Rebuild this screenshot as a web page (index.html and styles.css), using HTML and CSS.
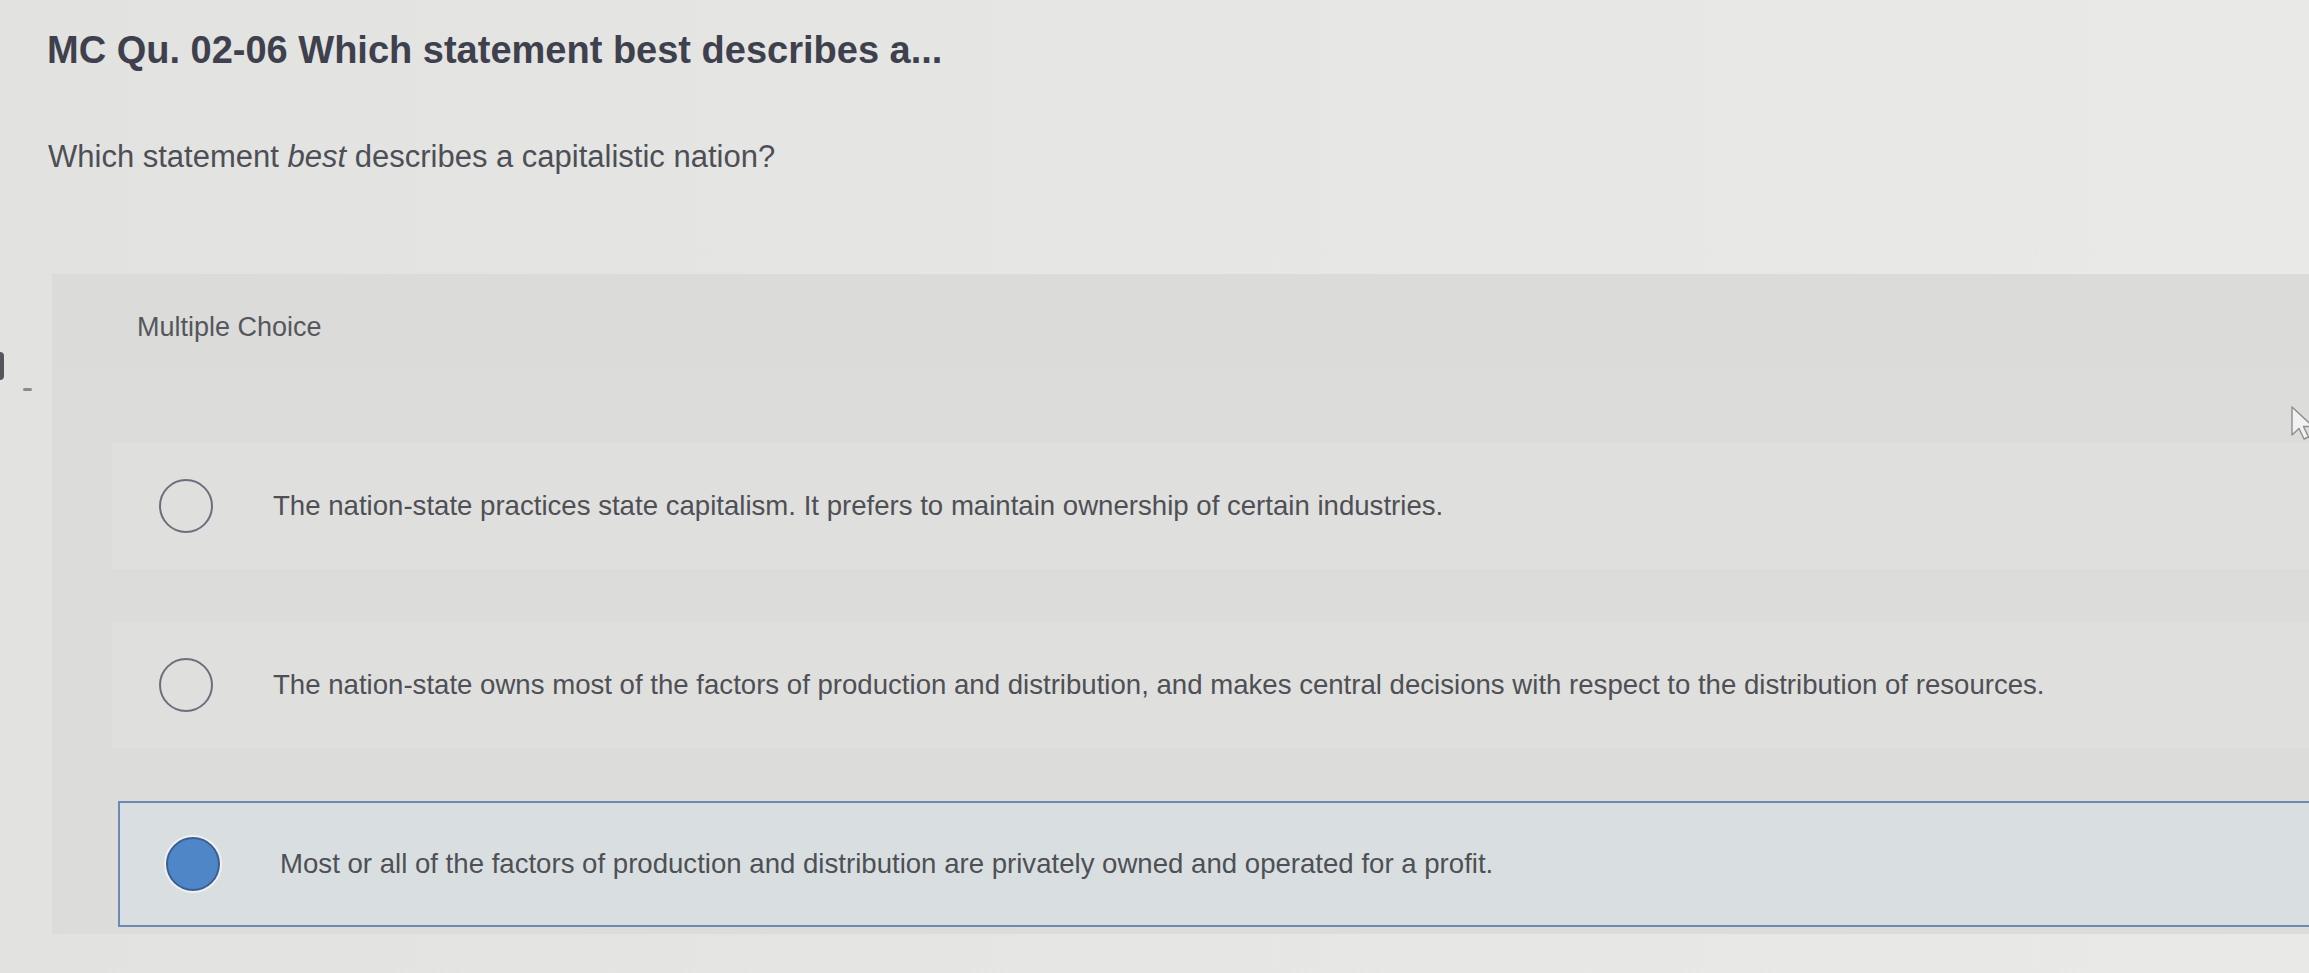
FILE: index.html
```html
<!DOCTYPE html>
<html lang="en">
<head>
<meta charset="utf-8">
<title>MC Qu. 02-06</title>
<link rel="stylesheet" href="styles.css">
</head>
<body>
<main class="page">
  <h1 class="title">MC Qu. 02-06 Which statement best describes a...</h1>
  <p class="prompt">Which statement <em>best</em> describes a capitalistic nation?</p>
  <section class="panel">
    <div class="panel-head">Multiple Choice</div>
    <div class="options">
      <div class="option">
        <span class="radio"></span>
        <span class="opt-text">The nation-state practices state capitalism. It prefers to maintain ownership of certain industries.</span>
      </div>
      <div class="option">
        <span class="radio"></span>
        <span class="opt-text">The nation-state owns most of the factors of production and distribution, and makes central decisions with respect to the distribution of resources.</span>
      </div>
      <div class="option selected">
        <span class="radio"></span>
        <span class="opt-text">Most or all of the factors of production and distribution are privately owned and operated for a profit.</span>
      </div>
    </div>
  </section>
</main>
<span class="edge-mark"></span>
<span class="edge-dash"></span>
<svg class="cursor" width="26" height="40" viewBox="0 0 26 40">
  <path d="M2 2 L2 30 L9 23.5 L14 34 L18.5 32 L13.5 21.5 L23 21.5 Z" fill="#f1f1ef" stroke="#8d8e92" stroke-width="1.4" stroke-linejoin="round"/>
</svg>
</body>
</html>
```

FILE: styles.css
```css
html, body {
  margin: 0;
  padding: 0;
}

body {
  width: 2309px;
  height: 973px;
  overflow: hidden;
  position: relative;
  background: linear-gradient(90deg, #e2e2e0 0%, #e6e6e4 50%, #e9e9e7 100%);
  font-family: "Liberation Sans", Arial, sans-serif;
  color: #4e5056;
}

.page {
  padding-top: 28px;
}

.title {
  margin: 0 0 0 47px;
  font-size: 38px;
  line-height: 45px;
  font-weight: 700;
  color: #3e414d;
}

.prompt {
  margin: 65px 0 0 48px;
  font-size: 31px;
  line-height: 37px;
  color: #4d4f56;
}

.prompt em {
  font-style: italic;
}

.panel {
  margin: 99px 0 0 52px;
  background: #dcdcda;
  padding: 0 0 7px 60px;
}

.panel-head {
  box-sizing: border-box;
  height: 95px;
  margin-left: -60px;
  padding: 37px 0 0 85px;
  font-size: 27px;
  line-height: 32px;
  color: #55575d;
  background: #dbdbd9;
}

.options {
  display: flex;
  flex-direction: column;
  gap: 53px;
  padding-top: 74px;
}

.option {
  box-sizing: border-box;
  height: 126px;
  display: flex;
  align-items: center;
  gap: 60px;
  padding-left: 47px;
  background: #dfdfdd;
}

.radio {
  box-sizing: border-box;
  flex: 0 0 54px;
  width: 54px;
  height: 54px;
  border: 2px solid #6c6e7c;
  border-radius: 50%;
}

.opt-text {
  font-size: 27.6px;
  line-height: 32px;
  color: #4e5056;
  white-space: nowrap;
}

.option.selected {
  margin-left: 6px;
  background: #d9dfe1;
  border: 2px solid #6d89b4;
  border-right: none;
  padding-left: 46px;
}

.option.selected .radio {
  background: #4f86c7;
  border: 2px solid #3c5f8e;
  box-shadow: 0 0 0 2px #eef2f4;
}

.edge-mark {
  position: absolute;
  left: 0;
  top: 352px;
  width: 4px;
  height: 28px;
  background: #55565a;
  border-radius: 0 4px 4px 0;
}

.edge-dash {
  position: absolute;
  left: 23px;
  top: 388px;
  width: 9px;
  height: 3px;
  background: #8a8b8e;
  border-radius: 2px;
}

.cursor {
  position: absolute;
  left: 2290px;
  top: 405px;
}
```
